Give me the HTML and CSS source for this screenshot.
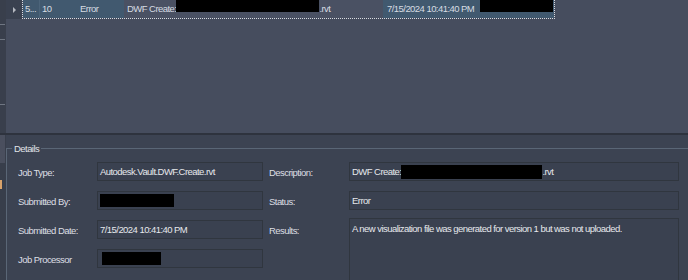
FILE: index.html
```html
<!DOCTYPE html>
<html lang="en">
<head>
    <meta charset="UTF-8">
    <title>Job Queue</title>
    <link rel="stylesheet" href="styles.css">
</head>
<body>
    <div id="queue-section">
        <div class="side-strip">
            <span class="tick"></span>
            <span class="tick"></span>
            <span class="tick tick-low"></span>
        </div>
        <div id="job-grid">
            <div class="job-row">
                <div class="row-header"><span class="arrow"></span></div>
                <div class="row-cells">
                    <div class="cell cell-id">5...</div>
                    <div class="cell cell-priority">10</div>
                    <div class="cell cell-status">Error</div>
                    <div class="cell cell-desc">DWF Create:<span class="redact redact-desc"></span>.rvt</div>
                    <div class="cell cell-date">7/15/2024 10:41:40 PM</div>
                    <div class="cell cell-user"><span class="redact redact-user"></span></div>
                </div>
            </div>
        </div>
    </div>
    <div id="details-section">
        <div class="side-strip side-strip-low">
            <span class="strip-light"></span>
            <span class="strip-mark"></span>
        </div>
        <fieldset id="details-box">
            <legend>Details</legend>
            <div class="details-grid">
                <div class="label">Job Type:</div>
                <div class="field">Autodesk.Vault.DWF.Create.rvt</div>
                <div class="label label-right">Description:</div>
                <div class="field field-wide">DWF Create:<span class="redact redact-field-desc"></span>.rvt</div>

                <div class="label">Submitted By:</div>
                <div class="field"><span class="redact redact-by"></span></div>
                <div class="label label-right">Status:</div>
                <div class="field field-wide">Error</div>

                <div class="label">Submitted Date:</div>
                <div class="field">7/15/2024 10:41:40 PM</div>
                <div class="label label-right">Results:</div>
                <div class="field field-wide field-results">A new visualization file was generated for version 1 but was not uploaded.</div>

                <div class="label">Job Processor</div>
                <div class="field"><span class="redact redact-proc"></span></div>
            </div>
        </fieldset>
    </div>
</body>
</html>
```
FILE: styles.css
```css
html, body {
    margin: 0;
    padding: 0;
}
body {
    width: 688px;
    height: 280px;
    overflow: hidden;
    background-color: #3c4352;
    font-family: "Liberation Sans", Arial, sans-serif;
    font-size: 9.5px;
    letter-spacing: -0.55px;
    color: #e2e4e8;
}
#queue-section {
    display: flex;
    height: 133px;
    background-color: #464d5e;
    border-bottom: 2px solid #2e333e;
}
.side-strip {
    width: 6px;
    flex-shrink: 0;
    background-color: #393f4c;
    display: flex;
    flex-direction: column;
}
.tick {
    display: block;
    height: 1px;
    width: 5px;
    background-color: #6f7682;
    margin-top: 24px;
}
.tick + .tick {
    margin-top: 14px;
}
.tick.tick-low {
    margin-top: 64px;
}
#job-grid {
    flex: 1;
}
.job-row {
    display: flex;
    height: 19px;
}
.row-header {
    width: 16px;
    background-color: #3a4150;
    display: flex;
    align-items: center;
    justify-content: center;
}
.arrow {
    width: 0;
    height: 0;
    border-top: 3px solid transparent;
    border-bottom: 3px solid transparent;
    border-left: 3px solid #b4b8c0;
}
.row-cells {
    display: flex;
    height: 18px;
    border-bottom: 1px dotted #d8dce2;
    border-left: 1px dotted #d8dce2;
    border-right: 1px dotted #d8dce2;
    width: 531px;
}
.cell {
    height: 18px;
    line-height: 18px;
    padding-left: 2px;
    box-sizing: border-box;
    white-space: nowrap;
    overflow: hidden;
    background-color: #41596f;
    color: #d6dce2;
    display: flex;
    align-items: flex-start;
}
.cell-id { width: 17px; border-right: 1px solid #4c647a; }
.cell-priority { width: 37px; }
.cell-status { width: 47px; padding-left: 3px; }
.cell-desc { width: 259px; background-color: #4a5163; padding-left: 3px; }
.cell-date { width: 96px; padding-left: 4px; }
.cell-user { width: 75px; padding-left: 1px; }
.redact {
    display: inline-block;
    background-color: #000;
}
.redact-desc { width: 143px; height: 13px; margin-top: -1px; }
.redact-user { width: 73px; height: 13px; margin-top: -1px; }
.strip-light {
    display: block;
    height: 28px;
    width: 5px;
    background-color: #4a4f5e;
}
.strip-mark {
    display: block;
    height: 9px;
    width: 2px;
    margin-top: 17px;
    background-color: #d9a36b;
}
#details-section {
    display: flex;
    height: 145px;
    overflow: hidden;
}
.side-strip-low {
    background-color: #383e4b;
}
#details-box {
    margin: 7px 0 0 0;
    padding: 7px 0 0 11px;
    border: 1px solid #5a6676;
    border-right: none;
    border-bottom: none;
    min-width: 0;
    flex: 1;
}
#details-box legend {
    padding: 0 2px;
    margin-left: -6px;
    line-height: 13px;
    color: #e0e3e8;
}
.details-grid {
    display: grid;
    grid-template-columns: 79px 166px 80px 336px;
    grid-auto-rows: 19px;
    row-gap: 10px;
}
.label {
    padding-top: 4px;
    line-height: 13px;
    color: #dcdfe4;
    white-space: nowrap;
}
.label-right {
    margin-left: 6px;
}
.field {
    box-sizing: border-box;
    background-color: #3a4150;
    border: 1px solid #30363f;
    padding: 0 2px;
    line-height: 17px;
    white-space: nowrap;
    overflow: hidden;
    display: flex;
    align-items: center;
    color: #e6e8ec;
}
.field-wide {
    margin-left: 6px;
}
.field-results {
    grid-row: span 3;
    align-items: flex-start;
    margin-top: -2px;
    padding-top: 1px;
}
.redact-field-desc { width: 141px; height: 14px; }
.redact-by { width: 74px; height: 13px; }
.redact-proc { width: 59px; height: 13px; margin-left: 2px; }
```
